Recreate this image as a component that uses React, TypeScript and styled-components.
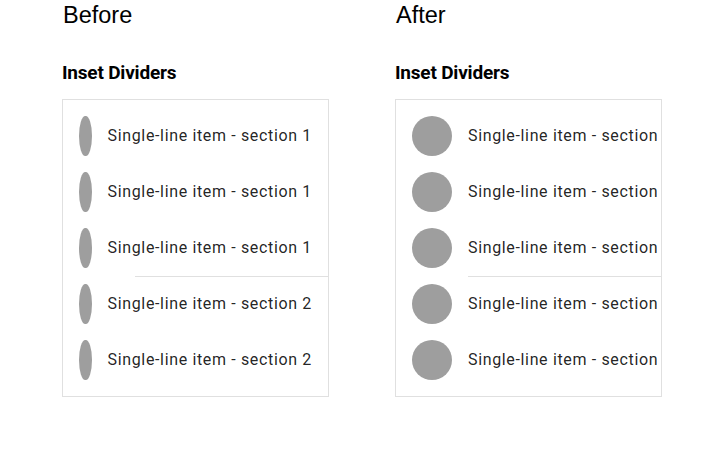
import React from "react";
import styled, { createGlobalStyle } from "styled-components";

const Global = createGlobalStyle`
  html, body { margin: 0; padding: 0; background: #fff; }
  body { font-family: Roboto, "Liberation Sans", Arial, sans-serif; }
`;

const Page = styled.div`
  display: flex;
  gap: 66px;
  padding: 0 0 0 62px;
`;

const Column = styled.section`
  display: flex;
  flex-direction: column;
  width: 267px;
`;

const Title = styled.h1`
  margin: 0;
  padding: 2px 0 0 1px;
  font-family: "Liberation Sans", Arial, sans-serif;
  font-weight: 400;
  font-size: 23.5px;
  line-height: 26px;
  color: #000;
`;

const Subtitle = styled.h2`
  margin: 33px 0 0 0;
  font-family: Roboto, sans-serif;
  font-weight: 700;
  font-size: 19px;
  line-height: 24px;
  letter-spacing: -0.2px;
  color: #000;
`;

const Panel = styled.ul`
  list-style: none;
  margin: 14px 0 0 0;
  padding: 8px 0;
  border: 1px solid #e0e0e0;
  overflow: hidden;
`;

const Item = styled.li`
  display: flex;
  align-items: center;
  height: 56px;
  box-sizing: border-box;
  padding: 0 16px;
`;

const Avatar = styled.span<{ $fixed: boolean }>`
  display: block;
  width: 40px;
  height: 40px;
  border-radius: 50%;
  background: #9e9e9e;
  flex-shrink: ${(p) => (p.$fixed ? 0 : 1)};
  margin-right: 16px;
`;

const Label = styled.span`
  flex-shrink: 0;
  white-space: nowrap;
  font-family: Roboto, sans-serif;
  font-size: 16px;
  line-height: 24px;
  letter-spacing: 0.65px;
  color: rgba(0, 0, 0, 0.87);
`;

const Divider = styled.li`
  height: 1px;
  margin: 0 0 -1px 72px;
  background: #e0e0e0;
`;

const sections = [1, 1, 1, 2, 2];

function Demo({ title, fixed }: { title: string; fixed: boolean }) {
  return (
    <Column>
      <Title>{title}</Title>
      <Subtitle>Inset Dividers</Subtitle>
      <Panel>
        {sections.map((s, i) => (
          <React.Fragment key={i}>
            {i === 3 && <Divider />}
            <Item>
              <Avatar $fixed={fixed} />
              <Label>Single-line item - section {s}</Label>
            </Item>
          </React.Fragment>
        ))}
      </Panel>
    </Column>
  );
}

export default function App() {
  return (
    <>
      <Global />
      <Page>
        <Demo title="Before" fixed={false} />
        <Demo title="After" fixed={true} />
      </Page>
    </>
  );
}
